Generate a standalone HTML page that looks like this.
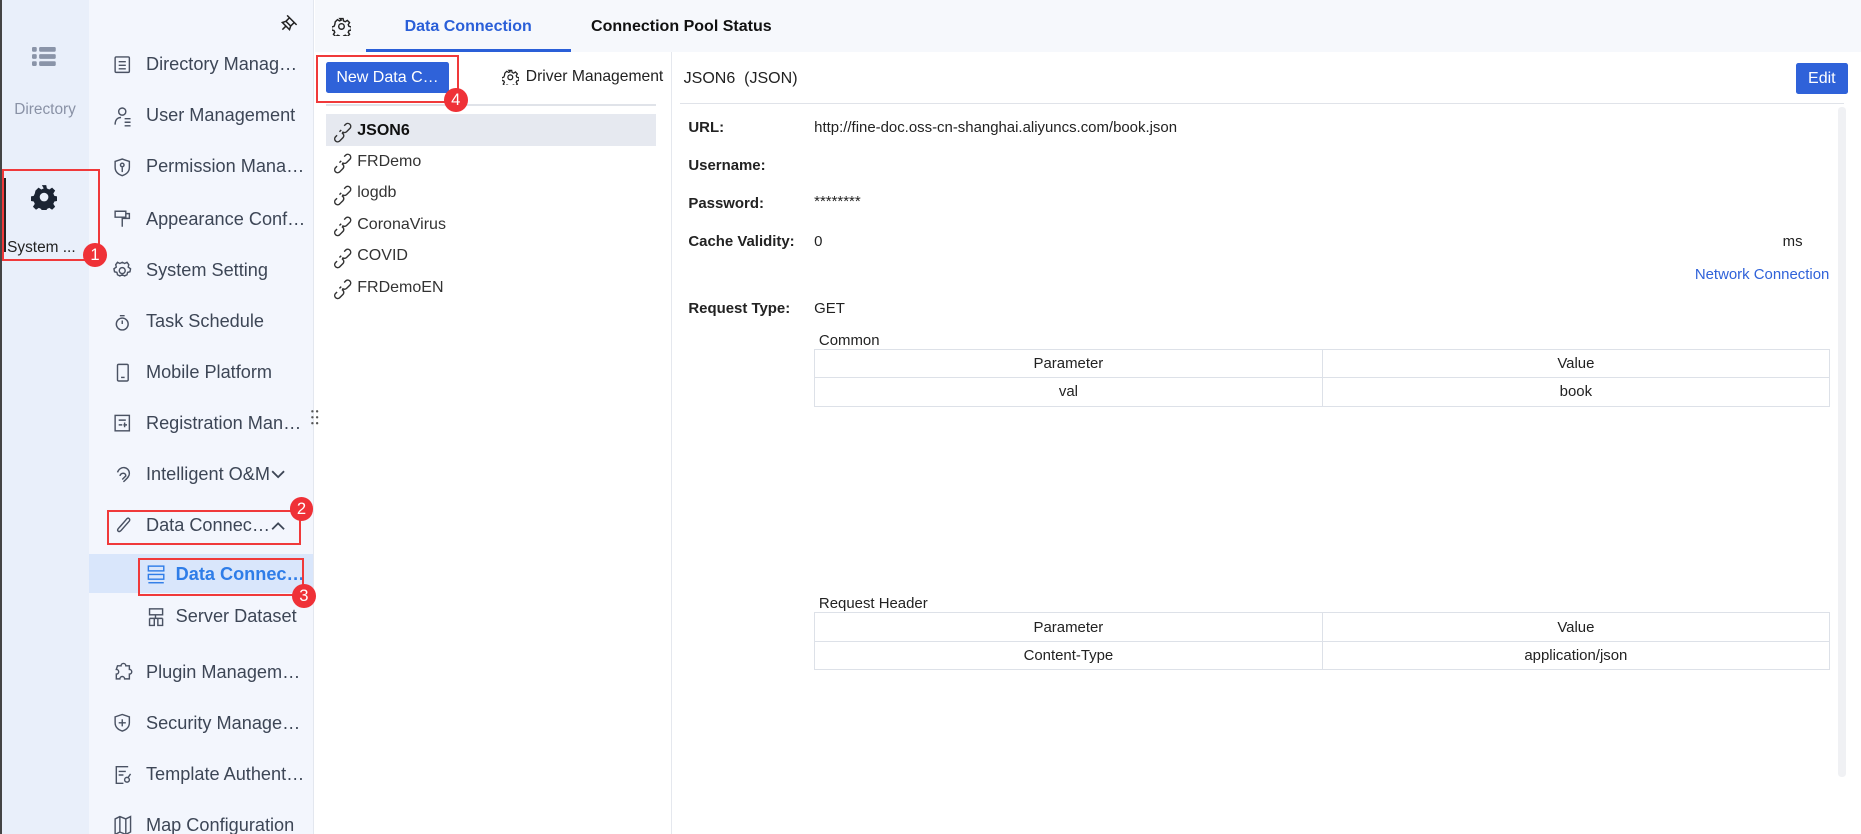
<!DOCTYPE html>
<html><head><meta charset="utf-8"><style>
html,body{margin:0;padding:0;width:1861px;height:834px;overflow:hidden;background:#fff}
#w{zoom:1.18686;width:1568px;height:703px;position:relative;font-family:"Liberation Sans",Arial,sans-serif;color:#333;overflow:hidden}
.a{position:absolute}
.rail{left:0;top:0;width:75px;height:703px;background:#e9effa;border-left:2px solid #444;box-sizing:border-box}
.side{left:75px;top:0;width:189px;height:703px;background:#f3f6fd;border-right:1px solid #e3e7ef}
.it{position:absolute;left:123px;font-size:15.3px;color:#3d4656;white-space:nowrap;line-height:20px}
.red{position:absolute;border:2px solid #f0393a;box-sizing:border-box;z-index:5}
.badge{position:absolute;width:20px;height:20px;border-radius:50%;background:#ef3137;color:#fff;font-size:14px;line-height:20px;text-align:center;z-index:6}
.li{position:absolute;left:301px;font-size:13.5px;line-height:16px;color:#333}
.lb{position:absolute;left:580px;font-size:12.6px;font-weight:bold;color:#222}
.v{position:absolute;left:686px;font-size:12.6px;color:#222}
table{border-collapse:collapse;font-size:12.6px;color:#222}
td{border:1px solid #dde1e8;height:23px;text-align:center;padding:0}
</style></head><body><div id="w">
<div class="a rail"></div>
<svg class="a" style="left:27px;top:40px" width="20" height="16" viewBox="0 0 20 16" fill="#8a94a8"><rect x="0" y="0" width="4" height="4" rx="1"/><rect x="6" y="0" width="14" height="4" rx="1"/><rect x="0" y="6" width="4" height="4" rx="1"/><rect x="6" y="6" width="14" height="4" rx="1"/><rect x="0" y="12" width="4" height="4" rx="1"/><rect x="6" y="12" width="14" height="4" rx="1"/></svg>
<div class="a" style="left:12px;top:85px;font-size:13px;color:#8a92a6">Directory</div>
<div class="a" style="left:2px;top:150px;width:3px;height:62px;background:#222"></div>
<svg class="a" style="left:26px;top:155px" width="22" height="22" viewBox="0 0 24 24"><path fill="#1b2433" d="M10 1h4l.6 3 2.2 1 2.6-1.7 2.8 2.8-1.7 2.6 1 2.2 3 .6v4l-3 .6-1 2.2 1.7 2.6-2.8 2.8-2.6-1.7-2.2 1-.6 3h-4l-.6-3-2.2-1-2.6 1.7-2.8-2.8 1.7-2.6-1-2.2-3-.6v-4l3-.6 1-2.2L4.1 6.1l2.8-2.8 2.6 1.7 2.2-1z"/><circle cx="12" cy="12" r="4" fill="#e9effa"/></svg>
<div class="a" style="left:6px;top:201px;font-size:13px;color:#222">System ...</div>

<div class="a side"></div>
<svg class="a" style="left:236px;top:11px" width="16" height="16" viewBox="0 0 16 16" fill="none" stroke="#222" stroke-width="1.3"><path d="M6 2l8 8M8 4l-3 3 4 4 3-3M5 7l-3 1 6 6 1-3M2 14l3-3"/></svg>
<div class="it" style="top:45px">Directory Manag…</div>
<div class="it" style="top:88px">User Management</div>
<div class="it" style="top:131px">Permission Mana…</div>
<div class="it" style="top:175px">Appearance Conf…</div>
<div class="it" style="top:218px">System Setting</div>
<div class="it" style="top:261px">Task Schedule</div>
<div class="it" style="top:304px">Mobile Platform</div>
<div class="it" style="top:347px">Registration Man…</div>
<div class="it" style="top:390px">Intelligent O&amp;M</div>
<svg class="a" style="left:228px;top:396px" width="12" height="8" fill="none" stroke="#3d4656" stroke-width="1.5"><path d="M1 1l5 5 5-5"/></svg>
<div class="it" style="top:433px">Data Connec…</div>
<svg class="a" style="left:228px;top:439px" width="12" height="8" fill="none" stroke="#3d4656" stroke-width="1.5"><path d="M1 7l5-5 5 5"/></svg>
<div class="a" style="left:75px;top:467px;width:189px;height:33px;background:#d9e6fb"></div>
<div class="it" style="left:148px;top:474px;color:#2f7de8;font-weight:bold">Data Connec…</div>
<div class="it" style="left:148px;top:510px">Server Dataset</div>
<div class="it" style="top:557px">Plugin Managem…</div>
<div class="it" style="top:600px">Security Manage…</div>
<div class="it" style="top:643px">Template Authent…</div>
<div class="it" style="top:686px">Map Configuration</div>
<svg class="a" style="left:0;top:0" width="264" height="703" fill="none" stroke="#4a5263" stroke-width="1.2">
<rect x="97" y="48" width="12" height="13" rx="1"/><path d="M100 52h6M100 55h6M100 58h6"/>
<circle cx="103" cy="94" r="3"/><path d="M97 105c0-4 2-6 5-6M105 100h5M105 103h5M105 106h5"/>
<path d="M97 136l6-2 6 2v5c0 4-3 6-6 7-3-1-6-3-6-7z"/><circle cx="103" cy="139" r="1.5"/><path d="M103 141v4"/>
<path d="M97 178h9v5h-9zM106 180h3v4h-6v3M103 187v4"/>
<circle cx="103" cy="228" r="2.5"/><path d="M103 221l2 1 2-1 1.5 2-.5 2 2 1.5-.5 2.5-2 .5-.5 2 -2 1-2-1-2 1-2-1-.5-2-2-.5-.5-2.5 2-1.5-.5-2 1.5-2 2 1z"/>
<circle cx="103" cy="273" r="5"/><path d="M101 266h4M103 270v3"/>
<rect x="99" y="307" width="9" height="14" rx="1"/><path d="M102 318h3"/>
<rect x="97" y="350" width="12" height="13"/><path d="M100 354h6M100 358h3M104 358h3M105 356v4"/>
<path d="M99 398c2-6 10-5 10 1 0 3-3 5-5 7M101 401c1-3 5-3 5 0l-3 3"/>
<path d="M107 437l-7 8c-2 2 0 4 2 2l7-8c1-2-1-3-2-2l-6 7"/>
<rect x="125" y="477" width="13" height="4" stroke="#2f7de8"/><rect x="125" y="484" width="13" height="4" stroke="#2f7de8"/><path d="M125 491h13" stroke="#2f7de8"/>
<rect x="126" y="513" width="11" height="5"/><path d="M131 518v3M126 521h11M126 521v6h4v-6M133 521v6h4v-6"/>
<path d="M99 561h3a2 2 0 014 0h3v3a2 2 0 010 4v4h-4a2 2 0 00-4 0h-3v-4a2 2 0 000-4z"/>
<path d="M97 604l6-2 6 2v5c0 4-3 6-6 7-3-1-6-3-6-7z"/><path d="M103 606v6M100 609h6"/>
<path d="M108 646h-10v14h6M100 650h6M100 653h4"/><circle cx="107" cy="657" r="2"/><path d="M108 655l2-3"/>
<path d="M97 690l4-2 5 2 4-2v13l-4 2-5-2-4 2zM101 688v13M106 690v13"/>
</svg>
<div class="red" style="left:2px;top:142px;width:82px;height:78px"></div>
<div class="badge" style="left:70px;top:205px">1</div>
<div class="red" style="left:90px;top:430px;width:164px;height:29px"></div>
<div class="badge" style="left:244px;top:419px">2</div>
<div class="red" style="left:116px;top:470px;width:140px;height:32px"></div>
<div class="badge" style="left:246px;top:492px">3</div>
<svg class="a" style="left:261px;top:345px" width="8" height="14" fill="#555"><circle cx="2" cy="2" r="1"/><circle cx="6" cy="2" r="1"/><circle cx="2" cy="7" r="1"/><circle cx="6" cy="7" r="1"/><circle cx="2" cy="12" r="1"/><circle cx="6" cy="12" r="1"/></svg>

<div class="a" style="left:265px;top:0;width:1303px;height:44px;background:#f6f8fc"></div>
<svg class="a" style="left:280px;top:14px" width="16" height="16" viewBox="0 0 24 24" fill="none" stroke="#222" stroke-width="1.8"><path d="M10 2h4l.6 3 2.2 1 2.6-1.7 2.8 2.8-1.7 2.6 1 2.2 3 .6v4l-3 .6-1 2.2 1.7 2.6-2.8 2.8-2.6-1.7-2.2 1-.6 3h-4l-.6-3-2.2-1-2.6 1.7-2.8-2.8 1.7-2.6-1-2.2-3-.6v-4l3-.6 1-2.2L4.1 6.1l2.8-2.8 2.6 1.7 2.2-1z"/><circle cx="12" cy="12" r="3.5"/></svg>
<div class="a" style="left:308px;top:14px;width:173px;text-align:center;font-size:13.5px;font-weight:bold;color:#2a5fd8">Data Connection</div>
<div class="a" style="left:308px;top:41px;width:173px;height:3px;background:#2a5fd8"></div>
<div class="a" style="left:498px;top:14px;font-size:13.5px;font-weight:bold;color:#111">Connection Pool Status</div>

<div class="a" style="left:565px;top:44px;width:1px;height:659px;background:#e5e8ee"></div>
<div class="a" style="left:275px;top:52px;width:103px;height:26px;background:#2f62d9;border-radius:2px;color:#fff;font-size:13.5px;line-height:26px;text-align:center">New Data C…</div>
<div class="red" style="left:266px;top:46px;width:121px;height:41px"></div>
<div class="badge" style="left:374px;top:74px">4</div>
<svg class="a" style="left:423px;top:58px" width="14" height="14" viewBox="0 0 24 24" fill="none" stroke="#222" stroke-width="1.8"><path d="M10 2h4l.6 3 2.2 1 2.6-1.7 2.8 2.8-1.7 2.6 1 2.2 3 .6v4l-3 .6-1 2.2 1.7 2.6-2.8 2.8-2.6-1.7-2.2 1-.6 3h-4l-.6-3-2.2-1-2.6 1.7-2.8-2.8 1.7-2.6-1-2.2-3-.6v-4l3-.6 1-2.2L4.1 6.1l2.8-2.8 2.6 1.7 2.2-1z"/><circle cx="12" cy="12" r="3.5"/></svg>
<div class="a" style="left:443px;top:57px;font-size:13.2px;color:#222">Driver Management</div>
<div class="a" style="left:275px;top:88px;width:278px;height:1px;background:#e0e3e9"></div>
<div class="a" style="left:275px;top:96px;width:278px;height:27px;background:#e6e9f0"></div>
<div class="li" style="top:102px;font-weight:bold;color:#111">JSON6</div>
<div class="li" style="top:128px">FRDemo</div>
<div class="li" style="top:154px">logdb</div>
<div class="li" style="top:181px">CoronaVirus</div>
<div class="li" style="top:207px">COVID</div>
<div class="li" style="top:234px">FRDemoEN</div>
<svg class="a" style="left:0;top:0" width="300" height="260" fill="none" stroke="#333" stroke-width="1.2">
<g id="l"><path d="M284 114l-1.5 1.5a2.5 2.5 0 003.5 3.5l3-3a2.5 2.5 0 00-1-4M290 106l1.5-1.5a2.5 2.5 0 013.5 3.5l-3 3a2.5 2.5 0 01-3.5 0M286 111l1.5-1.5"/></g>
<use href="#l" y="26"/><use href="#l" y="53"/><use href="#l" y="79"/><use href="#l" y="106"/><use href="#l" y="132"/>
</svg>

<div class="a" style="left:576px;top:58px;font-size:13.5px;color:#222;white-space:pre">JSON6  (JSON)</div>
<div class="a" style="left:1513px;top:53px;width:44px;height:26px;background:#2f62d9;border-radius:2px;color:#fff;font-size:13.5px;line-height:26px;text-align:center">Edit</div>
<div class="a" style="left:573px;top:87px;width:981px;height:1px;background:#e0e3e9"></div>
<div class="a" style="left:1549px;top:90px;width:6px;height:565px;background:#f0f1f4;border-radius:3px"></div>
<div class="lb" style="top:100px">URL:</div><div class="v" style="top:100px">http://fine-doc.oss-cn-shanghai.aliyuncs.com/book.json</div>
<div class="lb" style="top:132px">Username:</div>
<div class="lb" style="top:164px">Password:</div><div class="v" style="top:163px">********</div>
<div class="lb" style="top:196px">Cache Validity:</div><div class="v" style="top:196px">0</div>
<div class="a" style="left:1502px;top:196px;font-size:12.6px;color:#222">ms</div>
<div class="a" style="left:1428px;top:224px;font-size:12.6px;color:#2f62d9">Network Connection</div>
<div class="lb" style="top:253px">Request Type:</div><div class="v" style="top:253px">GET</div>
<div class="a" style="left:690px;top:280px;font-size:12.6px;color:#222">Common</div>
<table class="a" style="left:686px;top:294px;width:856px"><tr><td style="width:50%">Parameter</td><td>Value</td></tr><tr><td>val</td><td>book</td></tr></table>
<div class="a" style="left:690px;top:501px;font-size:12.6px;color:#222">Request Header</div>
<table class="a" style="left:686px;top:516px;width:856px"><tr><td style="width:50%">Parameter</td><td>Value</td></tr><tr><td>Content-Type</td><td>application/json</td></tr></table>
</div></body></html>
